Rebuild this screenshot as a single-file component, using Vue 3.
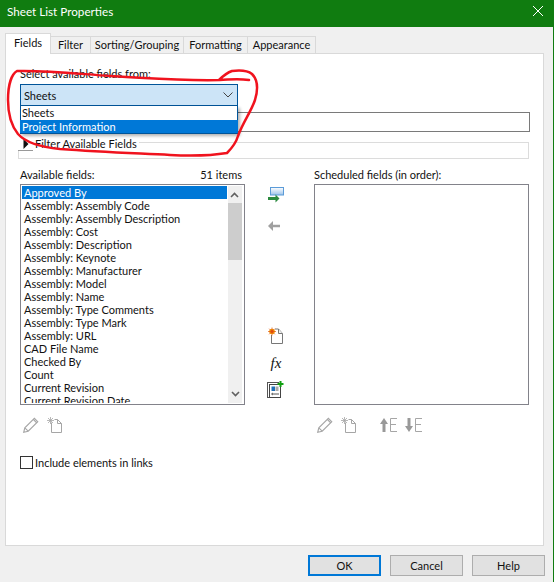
<script setup>
const tabs = [
  { name: 'Fields', cls: 't-fields', active: true },
  { name: 'Filter', cls: 't-filter' },
  { name: 'Sorting/Grouping', cls: 't-sort' },
  { name: 'Formatting', cls: 't-format' },
  { name: 'Appearance', cls: 't-appear' },
]
const fields = [
  'Approved By', 'Assembly: Assembly Code', 'Assembly: Assembly Description', 'Assembly: Cost',
  'Assembly: Description', 'Assembly: Keynote', 'Assembly: Manufacturer', 'Assembly: Model',
  'Assembly: Name', 'Assembly: Type Comments', 'Assembly: Type Mark', 'Assembly: URL',
  'CAD File Name', 'Checked By', 'Count', 'Current Revision', 'Current Revision Date',
]
const buttons = ['OK', 'Cancel', 'Help']
</script>

<template>
  <div class="window">
    <header class="titlebar">
      <span class="title">Sheet List Properties</span>
      <svg class="close" width="12" height="12" viewBox="0 0 12 12"><path d="M1 1l10 10M11 1L1 11" stroke="#fff" stroke-width="1" fill="none"/></svg>
    </header>

    <div class="body">
      <nav class="tabs">
        <div v-for="t in tabs" :key="t.name" class="tab" :class="[t.cls, { active: t.active }]">{{ t.name }}</div>
      </nav>

      <section class="panel">
        <div class="label">Select available fields from:</div>
        <div class="combo-wrap">
          <div class="combo">
            <span>Sheets</span>
            <svg width="10" height="6" viewBox="0 0 10 6"><path d="M.5.5L5 5 9.500.5" stroke="#444" fill="none"/></svg>
          </div>
          <div class="popup">
            <div class="opt">Sheets</div>
            <div class="opt sel">Project Information</div>
          </div>
        </div>

        <div class="search"></div>

        <div class="filter-box">
          <div class="filter-head">
            <span class="toggle"><svg width="6" height="10" viewBox="0 0 6 10"><path d="M.5 0L5.500 5 .5 10z" fill="#111"/></svg></span>
            <span class="filter-label">Filter Available Fields</span>
          </div>
        </div>

        <div class="columns">
          <div class="col">
            <div class="col-head"><span>Available fields:</span><span class="count">51 items</span></div>
            <div class="listbox">
              <div class="rows">
                <div v-for="(f, i) in fields" :key="f" class="row" :class="{ sel: i === 0 }">{{ f }}</div>
              </div>
              <div class="scrollbar">
                <svg class="sb-arrow" width="9" height="6" viewBox="0 0 9 6"><path d="M1 5l3.500-3.500L8 5" stroke="#606060" stroke-width="1.600" fill="none"/></svg>
                <div class="thumb"></div>
                <svg class="sb-arrow sb-down" width="9" height="6" viewBox="0 0 9 6"><path d="M1 1l3.500 3.500L8 1" stroke="#606060" stroke-width="1.600" fill="none"/></svg>
              </div>
            </div>
            <div class="tools">
              <svg width="18" height="18" viewBox="0 0 16 16"><path d="M1.500 14.500l1-4L11 2l3 3-8.500 8.500zM2.500 10.500l3 3M10 3l3 3" stroke="#a6a6a6" fill="#fff"/></svg>
              <svg width="16" height="16" viewBox="0 0 16 16"><path d="M4.500 5.500v10h10v-9l-4-4h-3M10.500 2.500v4h4" stroke="#a6a6a6" fill="none"/><path d="M1 1l5 5M6 1L1 6M3.500 0v7M0 3.500h7" stroke="#a6a6a6" stroke-width=".8"/></svg>
            </div>
          </div>

          <div class="mid">
            <svg class="ic-add" width="18" height="17" viewBox="0 0 18 17">
              <defs><linearGradient id="bluegrad" x1="0" y1="0" x2="0" y2="1"><stop offset="0" stop-color="#ffffff"/><stop offset="1" stop-color="#9cc3ea"/></linearGradient></defs>
              <rect x="3.500" y=".5" width="13" height="7.500" fill="url(#bluegrad)" stroke="#5b9bd8"/>
              <path d="M1 11.500h8.500" stroke="#2b8a3e" stroke-width="3"/><path d="M8.500 7.500l4 4-4 4z" fill="#2b8a3e"/>
            </svg>
            <svg class="ic-remove" width="14" height="10" viewBox="0 0 14 10"><path d="M4 5h9" stroke="#a0a0a0" stroke-width="2.500"/><path d="M6 0L1 5l5 5z" fill="#a0a0a0"/></svg>
            <svg class="ic-new" width="16" height="17" viewBox="0 0 16 17">
              <path d="M3.500 8v8.500h11v-10l-4-4.500H7" fill="#fff" stroke="#777"/><path d="M10.500 2v4.500h4" fill="#eee" stroke="#777"/>
              <circle cx="4" cy="4.500" r="2.800" fill="#f5a000"/><circle cx="4" cy="4.500" r="1.200" fill="#e02020"/>
              <path d="M4 .5v8M0 4.500h8M1.200 1.700l5.600 5.600M6.800 1.700L1.200 7.300" stroke="#e05010" stroke-width=".7"/>
            </svg>
            <span class="fx">fx</span>
            <svg class="ic-doc" width="17" height="17" viewBox="0 0 17 17">
              <rect x=".5" y="1.500" width="11" height="15" fill="#fff" stroke="#555"/>
              <rect x="2.500" y="3.500" width="11" height="13" fill="#fff" stroke="#444"/>
              <rect x="4.500" y="5.500" width="3.500" height="4.500" fill="#1f6fb5"/>
              <rect x="8.500" y="5.500" width="3" height="4.500" fill="#aaa"/>
              <path d="M6 13h6M4.500 13l1.500-1M4.500 13l1.500 1" stroke="#555" fill="none"/>
              <path d="M13.500 0v6M10.500 3h6" stroke="#12a012" stroke-width="2"/>
            </svg>
          </div>

          <div class="col col-right">
            <div class="col-head"><span>Scheduled fields (in order):</span></div>
            <div class="listbox listbox-empty"></div>
            <div class="tools">
              <svg width="18" height="18" viewBox="0 0 16 16"><path d="M1.500 14.500l1-4L11 2l3 3-8.500 8.500zM2.500 10.500l3 3M10 3l3 3" stroke="#a6a6a6" fill="#fff"/></svg>
              <svg width="16" height="16" viewBox="0 0 16 16"><path d="M4.500 5.500v10h10v-9l-4-4h-3M10.500 2.500v4h4" stroke="#a6a6a6" fill="none"/><path d="M1 1l5 5M6 1L1 6M3.500 0v7M0 3.500h7" stroke="#a6a6a6" stroke-width=".8"/></svg>
              <svg class="move" width="18" height="14" viewBox="0 0 18 14"><path d="M4 14V5" stroke="#999" stroke-width="3"/><path d="M0 6l4-6 4 6z" fill="#999"/><path d="M17 .5h-6.500v13H17M10.500 6.500H16" stroke="#a6a6a6" fill="none"/></svg>
              <svg width="18" height="14" viewBox="0 0 18 14"><path d="M4 0v9" stroke="#999" stroke-width="3"/><path d="M0 8l4 6 4-6z" fill="#999"/><path d="M17 .5h-6.500v13H17M10.500 6.500H16" stroke="#a6a6a6" fill="none"/></svg>
            </div>
          </div>
        </div>

        <label class="check"><span class="box"></span><span>Include elements in links</span></label>
      </section>

      <footer class="footer">
        <button v-for="(b, i) in buttons" :key="b" class="btn" :class="{ primary: i === 0 }">{{ b }}</button>
      </footer>
    </div>

    <svg class="scribble" width="554" height="582" viewBox="0 0 554 582">
      <path d="M249 80C235 78 228 80 220 80C180 81 150 78 110 76C80 74 45 70 17 71C12 74 8 84 8 100C8 112 10 124 18 134C26 143 40 147 60 149C100 152 130 153 170 155C190 156 215 155 227 153C232 148 236 143 238 136C243 122 251 112 255 100C258 90 258 80 252 74C247 70 240 70 232 71C226 73 222 77 219 80" fill="none" stroke="#f0131e" stroke-width="2.500" stroke-linecap="round" stroke-linejoin="round"/>
    </svg>
  </div>
</template>

<style scoped>
.window {
  position: relative;
  width: 554px;
  height: 582px;
  box-sizing: border-box;
  background: #f0f0f0;
  border-right: 1px solid #107c10;
  display: flex;
  flex-direction: column;
  font-family: Lato, "Open Sans", sans-serif;
  font-size: 11px;
  color: #111;
  overflow: hidden;
}
.titlebar {
  height: 27px;
  box-sizing: border-box;
  flex: none;
  background: #107c10;
  color: #fff;
  display: flex;
  align-items: center;
  justify-content: space-between;
  padding: 0 9px 5px 7px;
}
.title { font-size: 11.7px; }
.body { flex: 1; display: flex; flex-direction: column; padding: 7px 9px 0 5px; }
.tabs { display: flex; align-items: flex-end; height: 20px; margin-bottom: -1px; position: relative; z-index: 1; }
.tab {
  height: 18px;
  box-sizing: border-box;
  border: 1px solid #d9d9d9;
  border-left: 0;
  background: #f0f0f0;
  text-align: center;
  line-height: 16px;
}
.tab.active { height: 21px; background: #fff; border-left: 1px solid #d9d9d9; border-bottom: 0; line-height: 18px; }
.t-fields { width: 46px; }
.t-filter { width: 40px; }
.t-sort { width: 93px; }
.t-format { width: 64px; }
.t-appear { width: 68px; }
.panel {
  height: 493px;
  box-sizing: border-box;
  background: #fff;
  border: 1px solid #d9d9d9;
  padding: 12px 14px 0 14px;
}
.label { height: 18px; line-height: 16px; }
.combo-wrap { position: relative; width: 218px; height: 21px; z-index: 2; }
.combo {
  height: 22px;
  box-sizing: border-box;
  background: #cce4f7;
  border: 1px solid #005499;
  display: flex;
  align-items: center;
  justify-content: space-between;
  padding: 0 4px 0 3px;
}
.popup {
  position: absolute;
  left: 0;
  right: 0;
  top: 22px;
  height: 28px;
  box-sizing: border-box;
  background: #fff;
  border: 1px solid #005499;
  border-top: 0;
  box-shadow: 2px 2px 3px rgba(0,0,0,.3);
  padding-top: 0;
}
.opt { height: 13px; line-height: 13px; padding-left: 1px; }
.opt:first-child { height: 14px; }
.opt.sel { background: #0078d7; color: #fff; margin: 0 -1px; padding-left: 2px; }
.search {
  width: 510px;
  height: 20px;
  box-sizing: border-box;
  margin-top: 7px;
  border: 1px solid #7a7a7a;
}
.filter-box {
  width: 511px;
  height: 17px;
  margin: 10px 0 0 -2px;
  box-sizing: border-box;
  border: 1px solid #dcdcdc;
  position: relative;
}
.filter-head {
  position: absolute;
  left: -1px;
  top: -5px;
  display: flex;
  align-items: center;
  background: #fff;
  height: 13px;
  padding-right: 2px;
}
.toggle {
  width: 15px;
  height: 13px;
  box-sizing: border-box;
  border-bottom: 1px solid #999;
  display: flex;
  align-items: center;
  justify-content: center;
  margin-right: 2px;
}
.filter-label { line-height: 13px; position: relative; top: -1px; }
.columns { display: flex; margin-top: 5px; }
.col { width: 226px; }
.col-right { width: 216px; }
.col-head { height: 20px; display: flex; justify-content: space-between; align-items: center; padding-right: 3px; }
.listbox {
  height: 221px;
  box-sizing: border-box;
  border: 1px solid #82828a;
  display: flex;
  padding: 1px 2px 1px 1px;
  overflow: hidden;
}
.rows { width: 205px; flex: none; overflow: hidden; }
.row { height: 13px; line-height: 13px; padding-left: 2px; white-space: nowrap; }
.row.sel { background: #0078d7; color: #fff; }
.scrollbar {
  position: relative;
  flex: 1;
  margin-left: 1px;
  background: #f0f0f0;
  display: flex;
  flex-direction: column;
  align-items: center;
  padding-top: 6px;
}
.sb-arrow { flex: none; }
.sb-down { position: absolute; bottom: 6px; left: 3px; }
.thumb { flex: none; align-self: stretch; height: 57px; margin-top: 5px; background: #cdcdcd; }
.tools { display: flex; align-items: center; gap: 7px; padding: 11px 0 0 2px; height: 18px; }
.move { margin-left: 16px; }
.mid {
  width: 69px;
  flex: none;
  box-sizing: border-box;
  padding: 22px 7px 0 0;
  display: flex;
  flex-direction: column;
  align-items: center;
}
.ic-add { margin-top: 1px; }
.ic-remove { margin-top: 17px; margin-right: 4px; }
.ic-new { margin-top: 96px; }
.fx { font: italic 15px/18px "Liberation Serif", serif; margin-top: 10px; color: #111; }
.ic-doc { margin-top: 9px; }
.check { display: flex; align-items: center; gap: 2px; margin-top: 21px; height: 14px; }
.box { width: 13px; height: 13px; box-sizing: border-box; border: 1px solid #333; background: #fff; }
.footer { display: flex; justify-content: flex-end; gap: 9px; margin-top: 9px; margin-right: -1px; }
.btn {
  width: 73px;
  height: 21px;
  box-sizing: border-box;
  background: #e1e1e1;
  border: 1px solid #adadad;
  font: inherit;
  color: #111;
  padding: 0;
}
.btn.primary { border: 2px solid #0078d7; }
.scribble { position: absolute; left: 0; top: 0; pointer-events: none; z-index: 5; }
</style>
